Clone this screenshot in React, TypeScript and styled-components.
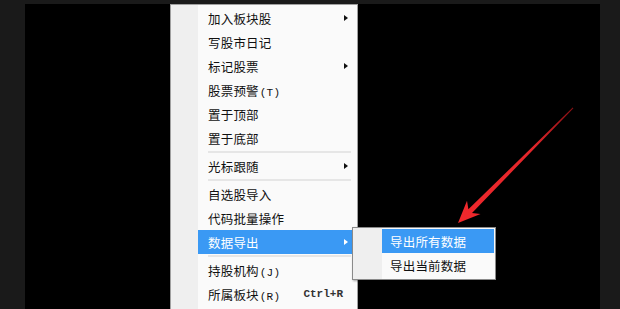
import React from 'react';
import styled, { createGlobalStyle } from 'styled-components';

type Item =
  | { kind: 'item'; label: string; key?: string; shortcut?: string; sub?: boolean; active?: boolean }
  | { kind: 'sep' };

const menuItems: Item[] = [
  { kind: 'item', label: '加入板块股', sub: true },
  { kind: 'item', label: '写股市日记' },
  { kind: 'item', label: '标记股票', sub: true },
  { kind: 'item', label: '股票预警', key: '(T)' },
  { kind: 'item', label: '置于顶部' },
  { kind: 'item', label: '置于底部' },
  { kind: 'sep' },
  { kind: 'item', label: '光标跟随', sub: true },
  { kind: 'sep' },
  { kind: 'item', label: '自选股导入' },
  { kind: 'item', label: '代码批量操作' },
  { kind: 'item', label: '数据导出', sub: true, active: true },
  { kind: 'sep' },
  { kind: 'item', label: '持股机构', key: '(J)' },
  { kind: 'item', label: '所属板块', key: '(R)', shortcut: 'Ctrl+R' },
];

const subItems = [
  { label: '导出所有数据', active: true },
  { label: '导出当前数据', active: false },
];

const GlobalStyle = createGlobalStyle`
  html, body {
    margin: 0;
    padding: 0;
    background: #191919;
  }
`;

const Page = styled.div`
  width: 620px;
  height: 309px;
  overflow: hidden;
  padding: 4px 20px 0 25px;
  box-sizing: border-box;
  display: flex;
  background: #1a1a1a;
`;

const Stage = styled.div`
  position: relative;
  flex: 1;
  background: #000;
  overflow: hidden;
`;

const Menu = styled.div<{ $gutter: number }>`
  position: absolute;
  box-sizing: border-box;
  border: 1px solid #a0a0a0;
  background: linear-gradient(to right, #efefef ${(p) => p.$gutter}px, #fafafa ${(p) => p.$gutter}px);
  font-family: "Noto Sans CJK SC", "Noto Sans", sans-serif;
  font-size: 12.5px;
  color: #111;
`;

const MainMenu = styled(Menu)`
  left: 145px;
  top: 0;
  width: 188px;
  padding: 1px 0 30px 27px;
`;

const SubMenu = styled(Menu)`
  left: 327px;
  top: 223px;
  width: 144px;
  padding: 1px 1px 2px 29px;
  border-color: #8a8a8a;
  box-shadow: 1px 1px 2px rgba(0, 0, 0, 0.35);
`;

const Row = styled.div<{ $active?: boolean; $indent: number }>`
  display: flex;
  align-items: center;
  height: 24px;
  padding: 0 6px 0 ${(p) => p.$indent}px;
  margin-right: ${(p) => (p.$indent === 10 ? 4 : 0)}px;
  background: ${(p) => (p.$active ? '#3a99f4' : 'transparent')};
  color: ${(p) => (p.$active ? '#fff' : '#111')};
  white-space: nowrap;
`;

const Label = styled.span`
  flex: 1;
  letter-spacing: 0.2px;
`;

const Key = styled.span`
  font-family: "Liberation Mono", monospace;
  font-size: 11px;
  margin-left: 1px;
`;

const Shortcut = styled.span`
  font-family: "Liberation Mono", monospace;
  font-size: 11px;
  font-weight: bold;
  color: #333;
  margin-right: -4px;
`;

const Trail = styled.span`
  width: 8px;
  display: flex;
  justify-content: flex-end;
`;

const Caret = styled.span<{ $light?: boolean }>`
  width: 0;
  height: 0;
  margin-right: -1px;
  border-top: 3.5px solid transparent;
  border-bottom: 3.5px solid transparent;
  border-left: 4px solid ${(p) => (p.$light ? '#fff' : '#111')};
`;

const Separator = styled.div`
  height: 4px;
  margin: 0 6px 0 10px;
  display: flex;
  align-items: center;
  &::after {
    content: '';
    flex: 1;
    height: 2px;
    background: #e6e6e6;
  }
`;

const Overlay = styled.svg`
  position: absolute;
  inset: 0;
  pointer-events: none;
`;

const Arrow: React.FC = () => (
  <Overlay width="575" height="305" viewBox="0 0 575 305">
    <defs>
      <linearGradient id="shaft" x1="548" y1="104" x2="433" y2="219" gradientUnits="userSpaceOnUse">
        <stop offset="0" stopColor="#8a1014" />
        <stop offset="0.35" stopColor="#e3262b" />
        <stop offset="1" stopColor="#f0282c" />
      </linearGradient>
    </defs>
    <polygon
      points="548.4,104.3 447,209 455.5,210 433,219 442,196.8 443.4,205.2 547.7,103.6"
      fill="url(#shaft)"
    />
  </Overlay>
);

export default function App() {
  return (
    <>
      <GlobalStyle />
      <Page>
        <Stage>
          <MainMenu $gutter={27}>
            {menuItems.map((it, i) =>
              it.kind === 'sep' ? (
                <Separator key={i} />
              ) : (
                <Row key={i} $active={it.active} $indent={10}>
                  <Label>
                    {it.label}
                    {it.key && <Key>{it.key}</Key>}
                  </Label>
                  {it.shortcut && <Shortcut>{it.shortcut}</Shortcut>}
                  <Trail>{it.sub && <Caret $light={it.active} />}</Trail>
                </Row>
              )
            )}
          </MainMenu>
          <SubMenu $gutter={29}>
            {subItems.map((it) => (
              <Row key={it.label} $active={it.active} $indent={8}>
                <Label>{it.label}</Label>
              </Row>
            ))}
          </SubMenu>
          <Arrow />
        </Stage>
      </Page>
    </>
  );
}
